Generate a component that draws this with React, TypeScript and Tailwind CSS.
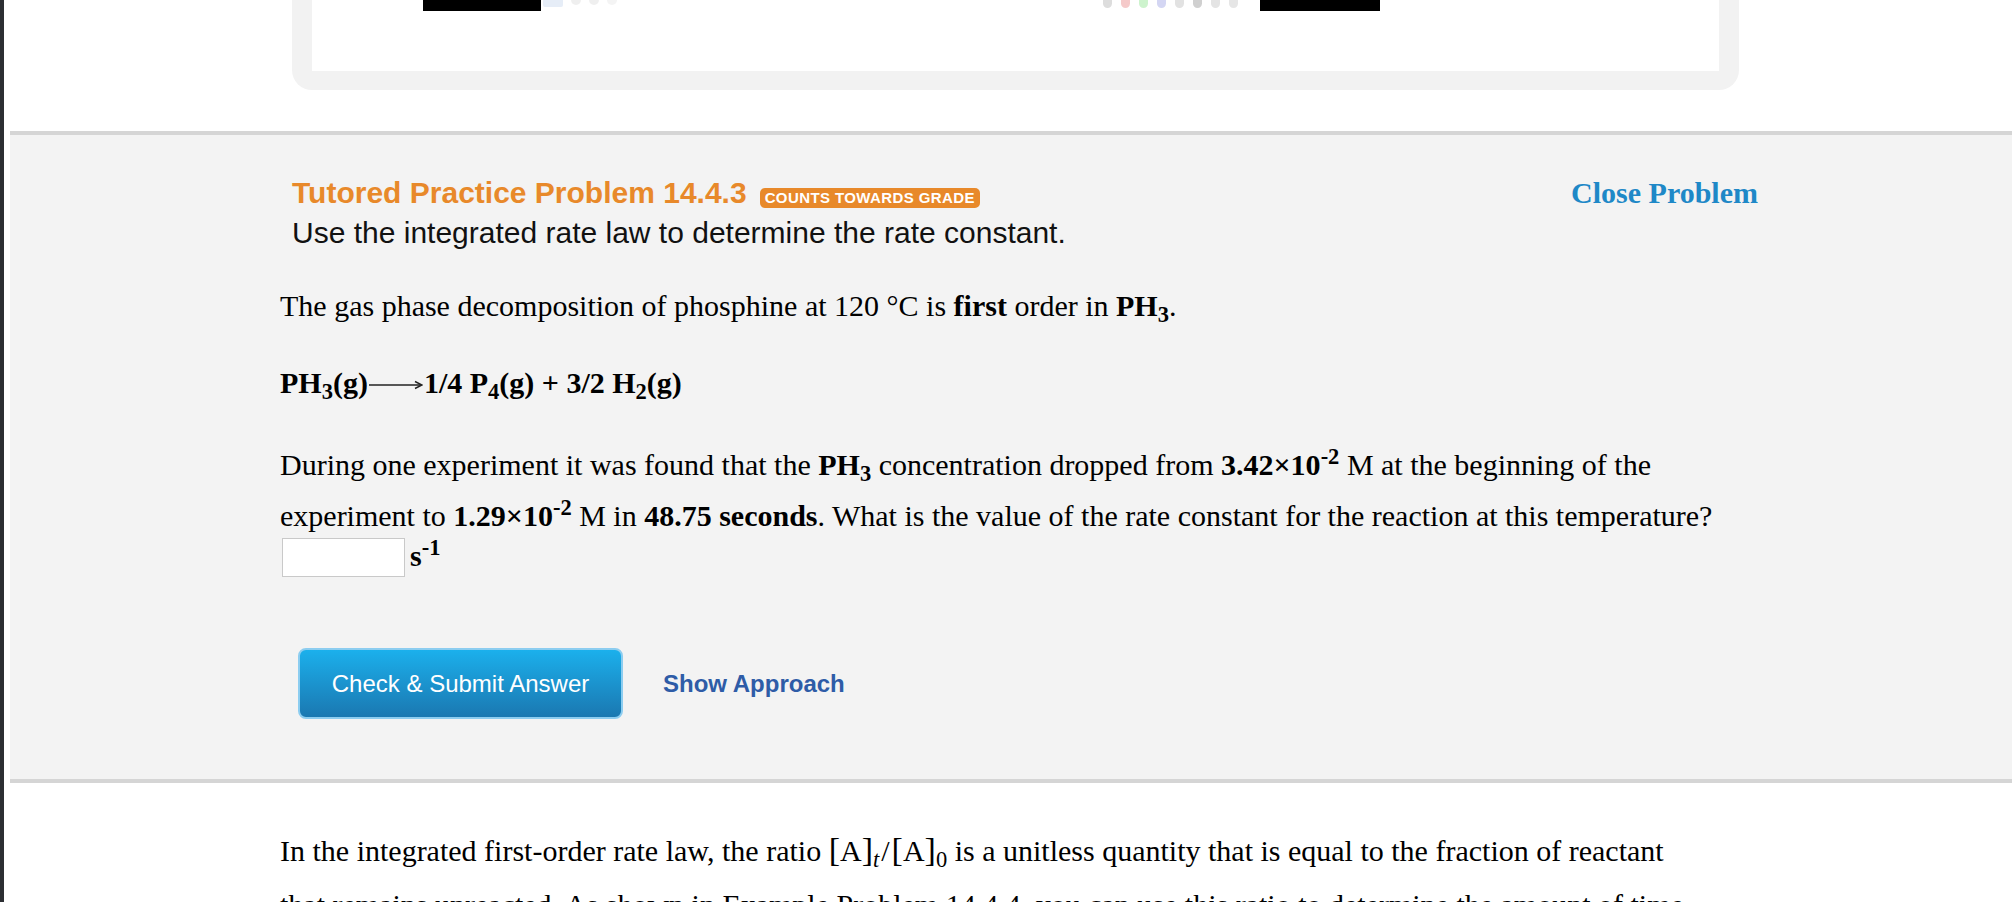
import React from 'react';

const serif = { fontFamily: '"Liberation Serif", "Times New Roman", serif' };
const sans = { fontFamily: '"Liberation Sans", Arial, Helvetica, sans-serif' };

const Arrow: React.FC = () => (
  <svg width="54" height="12" viewBox="0 0 54 12" className="inline-block align-[2px] mx-[1px]">
    <line x1="0" y1="6" x2="52" y2="6" stroke="#222" strokeWidth="1.4" />
    <path d="M46 2.5 L53 6 L46 9.5" fill="none" stroke="#222" strokeWidth="1.4" />
  </svg>
);

const FaintDots: React.FC = () => {
  const dots = ['#cfcfcf', '#f2b5b5', '#b8efb8', '#c2c6ee', '#d6d6d6', '#bdbdbd', '#d9d9d9', '#dcdcdc'];
  return (
    <div className="flex items-start gap-[9px] w-[155px] pl-[10px] opacity-70">
      {dots.map((c, i) => (
        <div key={i} className="w-[9px] h-[8px] rounded-b-full" style={{ backgroundColor: c }} />
      ))}
    </div>
  );
};

const App: React.FC = () => {
  return (
    <div className="w-[2012px] h-[902px] overflow-hidden bg-white flex text-black" style={serif}>
      <div className="w-[4px] shrink-0 bg-[#2c2e32]" />
      <div className="flex-1 flex flex-col">
        {/* top card (scrolled, mostly out of view) */}
        <div className="h-[131px] shrink-0">
          <div className="ml-[288px] w-[1447px] h-[90px] bg-[#f2f2f2] rounded-b-[20px] px-[20px]">
            <div className="h-[71px] bg-white flex items-start">
              <div className="ml-[111px] w-[118px] h-[11px] bg-black" />
              <div className="w-[94px] flex items-start gap-[8px] pl-[2px] opacity-60">
                <div className="w-[20px] h-[7px] bg-[#d6e2f2] rounded-b-[2px]" />
                <div className="w-[10px] h-[5px] bg-[#e6e6e6] rounded-b-full" />
                <div className="w-[10px] h-[5px] bg-[#e6e6e6] rounded-b-full" />
                <div className="w-[10px] h-[5px] bg-[#ededed] rounded-b-full" />
              </div>
              <div className="ml-[458px]">
                <FaintDots />
              </div>
              <div className="ml-[12px] w-[120px] h-[11px] bg-black" />
            </div>
          </div>
        </div>

        {/* problem panel */}
        <div className="ml-[6px] h-[652px] shrink-0 bg-[#f3f3f3] border-y-[4px] border-[#d5d5d5] pl-[270px] pt-[41px]">
          <div className="ml-[12px] w-[1466px] flex items-baseline justify-between">
            <div className="flex items-baseline">
              <span className="text-[30px] leading-[34px] font-bold text-[#e8892a]" style={sans}>
                Tutored Practice Problem 14.4.3
              </span>
              <span
                className="ml-[13px] px-[5px] rounded-[5px] bg-[#e8892a] text-white text-[15px] leading-[20px] font-bold tracking-[0.4px]"
                style={sans}
              >
                COUNTS TOWARDS GRADE
              </span>
            </div>
            <span className="text-[30px] leading-[34px] font-bold text-[#1e88c7]">Close Problem</span>
          </div>
          <div className="ml-[12px] mt-[6px] text-[30px] leading-[34px] text-[#111]" style={sans}>
            Use the integrated rate law to determine the rate constant.
          </div>

          <p className="mt-[30px] text-[30px] leading-[51px] whitespace-nowrap">
            The gas phase decomposition of phosphine at 120 °C is <b>first</b> order in{' '}
            <b>
              PH<sub>3</sub>
            </b>
            .
          </p>

          <p className="mt-[26px] text-[30px] leading-[51px] font-bold whitespace-nowrap">
            PH<sub>3</sub>(g)
            <Arrow />
            1/4 P<sub>4</sub>(g) + 3/2 H<sub>2</sub>(g)
          </p>

          <p className="mt-[31px] text-[30px] leading-[51px] whitespace-nowrap">
            During one experiment it was found that the{' '}
            <b>
              PH<sub>3</sub>
            </b>{' '}
            concentration dropped from{' '}
            <b>
              3.42×10<sup>-2</sup>
            </b>{' '}
            M at the beginning of the
            <br />
            experiment to{' '}
            <b>
              1.29×10<sup>-2</sup>
            </b>{' '}
            M in <b>48.75 seconds</b>. What is the value of the rate constant for the reaction at this temperature?
          </p>

          <div className="-mt-[3px] flex items-start">
            <input
              type="text"
              className="ml-[2px] w-[123px] h-[39px] bg-white border border-[#c9c9c9] outline-none"
            />
            <span className="ml-[5px] mt-[1px] text-[30px] leading-[34px] font-bold">
              s<sup>-1</sup>
            </span>
          </div>

          <div className="mt-[71px] ml-[18px] flex items-center">
            <button
              className="w-[325px] h-[71px] rounded-[8px] border-2 border-[#8ccdf0] bg-gradient-to-b from-[#1bb0ec] to-[#1a78b1] text-white text-[24px]"
              style={sans}
            >
              Check &amp; Submit Answer
            </button>
            <span className="ml-[40px] text-[24px] font-bold text-[#2e5ca7]" style={sans}>
              Show Approach
            </span>
          </div>
        </div>

        {/* explanation text */}
        <div className="pl-[276px] pt-[40px]">
          <p className="text-[30px] leading-[54px] whitespace-nowrap">
            In the integrated first-order rate law, the ratio{' '}
            <span className="inline-flex items-baseline">
              <span className="text-[34px]">[</span>A<span className="text-[34px]">]</span>
              <sub className="italic">t</sub>
              <span className="mx-[2px]">/</span>
              <span className="text-[34px]">[</span>A<span className="text-[34px]">]</span>
              <sub>0</sub>
            </span>{' '}
            is a unitless quantity that is equal to the fraction of reactant
            <br />
            that remains unreacted. As shown in Example Problem 14.4.4, you can use this ratio to determine the amount of time
          </p>
        </div>
      </div>
    </div>
  );
};

export default App;
